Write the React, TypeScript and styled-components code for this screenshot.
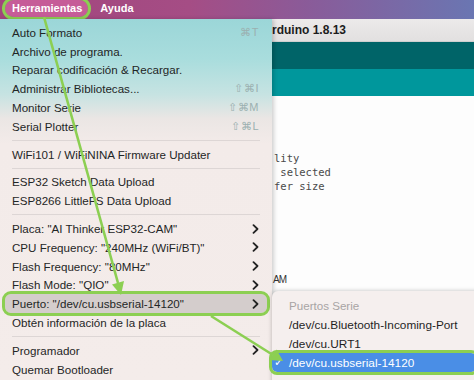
import React from 'react';
import styled, { createGlobalStyle } from 'styled-components';

type MenuItem =
  | { kind: 'sep' }
  | { kind: 'item'; label: string; shortcut?: string; sub?: boolean; active?: boolean };

const menuItems: MenuItem[] = [
  { kind: 'item', label: 'Auto Formato', shortcut: '⌘T' },
  { kind: 'item', label: 'Archivo de programa.' },
  { kind: 'item', label: 'Reparar codificación & Recargar.' },
  { kind: 'item', label: 'Administrar Bibliotecas...', shortcut: '⇧⌘I' },
  { kind: 'item', label: 'Monitor Serie', shortcut: '⇧⌘M' },
  { kind: 'item', label: 'Serial Plotter', shortcut: '⇧⌘L' },
  { kind: 'sep' },
  { kind: 'item', label: 'WiFi101 / WiFiNINA Firmware Updater' },
  { kind: 'sep' },
  { kind: 'item', label: 'ESP32 Sketch Data Upload' },
  { kind: 'item', label: 'ESP8266 LittleFS Data Upload' },
  { kind: 'sep' },
  { kind: 'item', label: 'Placa: "AI Thinker ESP32-CAM"', sub: true },
  { kind: 'item', label: 'CPU Frequency: "240MHz (WiFi/BT)"', sub: true },
  { kind: 'item', label: 'Flash Frequency: "80MHz"', sub: true },
  { kind: 'item', label: 'Flash Mode: "QIO"', sub: true },
  { kind: 'item', label: 'Puerto: "/dev/cu.usbserial-14120"', sub: true, active: true },
  { kind: 'item', label: 'Obtén información de la placa' },
  { kind: 'sep' },
  { kind: 'item', label: 'Programador', sub: true },
  { kind: 'item', label: 'Quemar Bootloader' },
];

const ports = ['/dev/cu.Bluetooth-Incoming-Port', '/dev/cu.URT1'];

const GREEN = '#8ccf52';

const Chevron = () => (
  <svg width="7" height="10" viewBox="0 0 7 10">
    <path d="M1.5 1.2 L5.5 5 L1.5 8.8" fill="none" stroke="#222" strokeWidth="1.8" strokeLinecap="round" strokeLinejoin="round" />
  </svg>
);

const Arrows = () => (
  <ArrowLayer width="474" height="380" viewBox="0 0 474 380">
    <line x1="44" y1="17" x2="118" y2="283" stroke={GREEN} strokeWidth="2.6" />
    <polygon points="121,295 124,281 112,284.5" fill={GREEN} />
    <line x1="211" y1="316" x2="273" y2="355" stroke={GREEN} strokeWidth="2.6" />
    <polygon points="283,361 276.5,349.5 269.5,360" fill={GREEN} />
  </ArrowLayer>
);

export default function App() {
  return (
    <>
      <GlobalStyle />
      <Screen>
        <MenuBar>
          <BarItem $active>Herramientas</BarItem>
          <BarItem>Ayuda</BarItem>
        </MenuBar>
        <Body>
          <Dropdown>
            {menuItems.map((item, i) =>
              item.kind === 'sep' ? (
                <Separator key={i} />
              ) : (
                <Row key={i} $active={item.active}>
                  <span>{item.label}</span>
                  {item.shortcut && <Shortcut>{item.shortcut}</Shortcut>}
                  {item.sub && <Chevron />}
                </Row>
              )
            )}
          </Dropdown>
          <Window>
            <TitleBar>rduino 1.8.13</TitleBar>
            <Toolbar />
            <Tabs />
            <Editor>
              <Code>
                {'lity\n selected\nfer size'}
              </Code>
              <Console>AM</Console>
            </Editor>
          </Window>
        </Body>
        <Submenu>
          <SubHeader>Puertos Serie</SubHeader>
          {ports.map((p) => (
            <SubRow key={p}>{p}</SubRow>
          ))}
          <SubRow $selected>
            <Check>✓</Check>/dev/cu.usbserial-14120
          </SubRow>
        </Submenu>
        <Arrows />
      </Screen>
    </>
  );
}

const GlobalStyle = createGlobalStyle`
  body {
    margin: 0;
    overflow: hidden;
    font-family: 'Liberation Sans', Arial, sans-serif;
  }
`;

const Screen = styled.div`
  position: relative;
  width: 474px;
  height: 380px;
  overflow: hidden;
  display: flex;
  flex-direction: column;
  background: #fff;
`;

const MenuBar = styled.div`
  height: 19px;
  flex-shrink: 0;
  display: flex;
  align-items: center;
  gap: 4px;
  padding-left: 5px;
  background: linear-gradient(90deg, #a2457c 0%, #a54d85 40%, #8a5b99 65%, #6a76b2 100%);
`;

const BarItem = styled.div<{ $active?: boolean }>`
  color: #fff;
  font-weight: 700;
  font-size: 11px;
  line-height: 17px;
  padding: ${({ $active }) => ($active ? '0 6px 0 7px' : '0 8px')};
  border-radius: 10px;
  background: ${({ $active }) => ($active ? '#c65c98' : 'transparent')};
  outline: ${({ $active }) => ($active ? `3px solid ${GREEN}` : 'none')};
  margin-top: -2px;
`;

const Body = styled.div`
  flex: 1;
  display: flex;
  min-height: 0;
`;

const Dropdown = styled.div`
  width: 272px;
  flex-shrink: 0;
  padding-top: 4px;
  box-sizing: border-box;
  background: linear-gradient(180deg, #9bd6d8 0px, #a9dddd 40px, #c6e3e2 75px, #ebe6e4 100px, #f3ebe9 125px, #f4ecea 100%);
  box-shadow: 2px 0 4px rgba(0, 0, 0, 0.18);
  position: relative;
  z-index: 1;
`;

const Row = styled.div<{ $active?: boolean }>`
  height: 18.8px;
  display: flex;
  align-items: center;
  justify-content: space-between;
  font-size: 11.6px;
  color: #1f2626;
  margin: ${({ $active }) => ($active ? '0 5px' : '0')};
  padding: ${({ $active }) => ($active ? '0 8px 0 7px' : '0 13px 0 12px')};
  border-radius: 6px;
  background: ${({ $active }) => ($active ? '#d4cdcc' : 'transparent')};
  outline: ${({ $active }) => ($active ? `3px solid ${GREEN}` : 'none')};
  white-space: nowrap;
`;

const Shortcut = styled.span`
  color: #9bb0b0;
  font-size: 11px;
  letter-spacing: 0.5px;
`;

const Separator = styled.div`
  height: 9px;
  margin: 0 12px;
  background: linear-gradient(#ddd6d5, #ddd6d5) center / 100% 1px no-repeat;
`;

const Window = styled.div`
  flex: 1;
  display: flex;
  flex-direction: column;
  min-width: 0;
`;

const TitleBar = styled.div`
  height: 22px;
  flex-shrink: 0;
  display: flex;
  align-items: center;
  background: linear-gradient(180deg, #eceaea, #e2e0e0);
  font-weight: 700;
  font-size: 12px;
  color: #1c1c1c;
  white-space: nowrap;
  border-bottom: 1px solid #cfcfcf;
`;

const Toolbar = styled.div`
  height: 27px;
  flex-shrink: 0;
  background: #006468;
`;

const Tabs = styled.div`
  height: 27px;
  flex-shrink: 0;
  background: #00979c;
`;

const Editor = styled.div`
  flex: 1;
  display: flex;
  flex-direction: column;
  background: #fdfdfd;
`;

const Code = styled.pre`
  margin: 0;
  padding: 55px 0 0 2px;
  font-family: 'DejaVu Sans Mono', 'Liberation Mono', monospace;
  font-size: 10.5px;
  line-height: 14px;
  color: #4a4a4a;
  flex: 1;
`;

const Console = styled.div`
  height: 106px;
  padding-left: 1px;
  font-size: 10px;
  line-height: 12px;
  color: #333;
  letter-spacing: -1px;
`;

const Submenu = styled.div`
  position: absolute;
  left: 272px;
  top: 291px;
  width: 210px;
  height: 100px;
  box-sizing: border-box;
  padding: 5px 0 0 0;
  background: #f5efee;
  border-radius: 6px;
  box-shadow: 0 0 4px rgba(0, 0, 0, 0.25);
  z-index: 2;
`;

const SubHeader = styled.div`
  height: 19px;
  display: flex;
  align-items: center;
  padding-left: 17px;
  font-size: 11.6px;
  color: #a8a4a4;
`;

const SubRow = styled.div<{ $selected?: boolean }>`
  height: 19px;
  display: flex;
  align-items: center;
  padding-left: ${({ $selected }) => ($selected ? '2px' : '17px')};
  margin-right: 6px;
  font-size: 11.8px;
  white-space: nowrap;
  color: ${({ $selected }) => ($selected ? '#fff' : '#1f1f1f')};
  background: ${({ $selected }) => ($selected ? '#4a8ee6' : 'transparent')};
  border-radius: 5px;
  outline: ${({ $selected }) => ($selected ? `3px solid ${GREEN}` : 'none')};
`;

const Check = styled.span`
  width: 15px;
  font-size: 11px;
  font-family: 'DejaVu Sans', sans-serif;
`;

const ArrowLayer = styled.svg`
  position: absolute;
  left: 0;
  top: 0;
  pointer-events: none;
  z-index: 3;
`;
